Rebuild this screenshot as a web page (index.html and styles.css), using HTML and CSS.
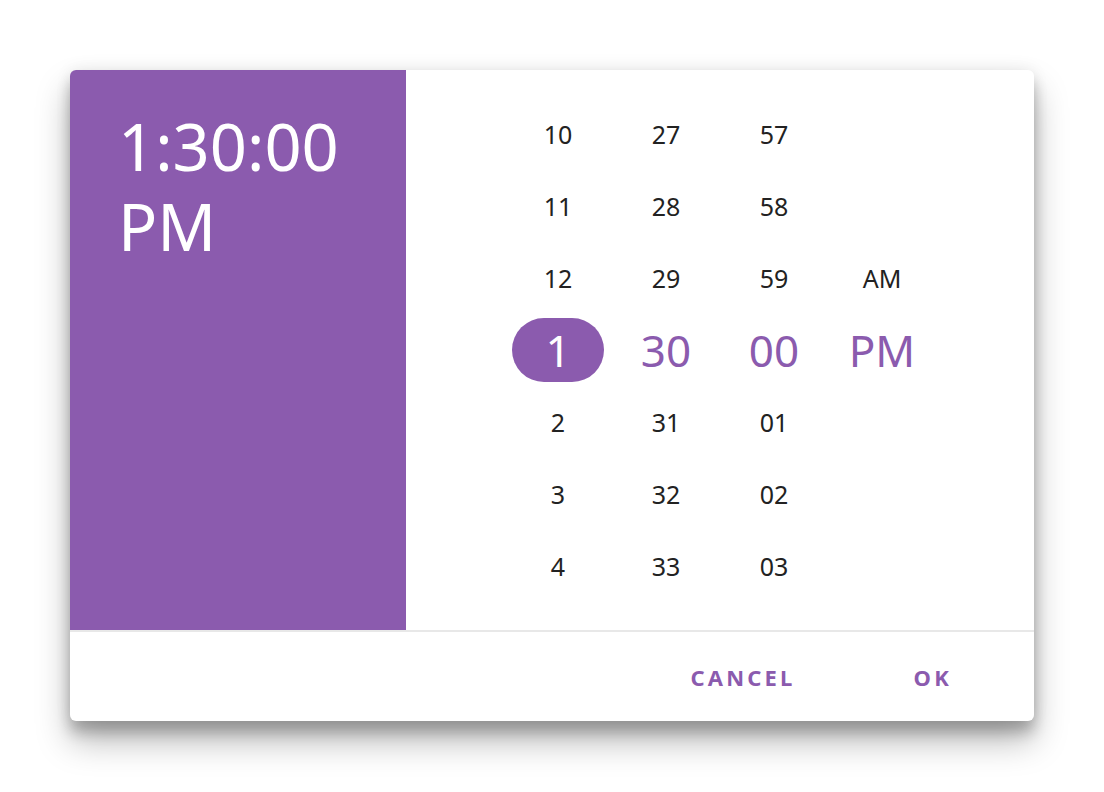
FILE: index.html
```html
<!DOCTYPE html>
<html lang="en">
<head>
    <meta charset="UTF-8">
    <meta name="viewport" content="width=device-width, initial-scale=1.0">
    <title>Time Picker</title>
    <link rel="stylesheet" href="styles.css">
</head>
<body>
    <div class="page">
        <div class="dialog">
            <div class="dialog-body">
                <div class="header">
                    <div class="header-time">1:30:00<br>PM</div>
                </div>
                <div class="picker">
                    <div class="column">
                        <div class="cell">10</div>
                        <div class="cell">11</div>
                        <div class="cell">12</div>
                        <div class="cell selected pill">1</div>
                        <div class="cell">2</div>
                        <div class="cell">3</div>
                        <div class="cell">4</div>
                    </div>
                    <div class="column">
                        <div class="cell">27</div>
                        <div class="cell">28</div>
                        <div class="cell">29</div>
                        <div class="cell selected">30</div>
                        <div class="cell">31</div>
                        <div class="cell">32</div>
                        <div class="cell">33</div>
                    </div>
                    <div class="column">
                        <div class="cell">57</div>
                        <div class="cell">58</div>
                        <div class="cell">59</div>
                        <div class="cell selected">00</div>
                        <div class="cell">01</div>
                        <div class="cell">02</div>
                        <div class="cell">03</div>
                    </div>
                    <div class="column">
                        <div class="cell"></div>
                        <div class="cell"></div>
                        <div class="cell">AM</div>
                        <div class="cell selected">PM</div>
                        <div class="cell"></div>
                        <div class="cell"></div>
                        <div class="cell"></div>
                    </div>
                </div>
            </div>
            <div class="actions">
                <button class="action-button cancel">CANCEL</button>
                <button class="action-button ok">OK</button>
            </div>
        </div>
    </div>
</body>
</html>
```

FILE: styles.css
```css
body {
    margin: 0;
    padding: 0;
    background: #fff;
    font-family: 'Noto Sans', 'Open Sans', sans-serif;
}

.page {
    padding: 70px 0 0 70px;
    height: 792px;
    box-sizing: border-box;
}

.dialog {
    width: 964px;
    height: 651px;
    background: #fff;
    border-radius: 6px;
    overflow: hidden;
    box-shadow: 0 20px 34px rgba(0, 0, 0, 0.28), 0 12px 14px rgba(0, 0, 0, 0.2), 0 0 16px rgba(0, 0, 0, 0.08);
    display: flex;
    flex-direction: column;
}

.dialog-body {
    display: flex;
    height: 560px;
    border-bottom: 2px solid #e8e8e8;
}

.header {
    width: 336px;
    background: #8b5bae;
    color: #fff;
    padding: 36px 0 0 48px;
    box-sizing: border-box;
}

.header-time {
    font-size: 65px;
    line-height: 80px;
    font-weight: 400;
}

.picker {
    flex: 1;
    display: flex;
    justify-content: center;
    align-items: center;
}

.column {
    width: 108px;
    display: flex;
    flex-direction: column;
    align-items: center;
}

.cell {
    height: 72px;
    display: flex;
    align-items: center;
    justify-content: center;
    font-size: 25px;
    color: #222;
}

.cell.selected {
    font-size: 44px;
    color: #8b5bae;
}

.cell.pill {
    width: 92px;
    height: 64px;
    margin: 4px 0;
    border-radius: 32px;
    background: #8b5bae;
    color: #fff;
}

.actions {
    flex: 1;
    display: flex;
    justify-content: flex-end;
    align-items: center;
    padding-right: 82px;
}

.action-button {
    background: none;
    border: none;
    font-family: 'Noto Sans', 'Open Sans', sans-serif;
    font-size: 22px;
    font-weight: 700;
    letter-spacing: 3.2px;
    color: #8b5bae;
    padding: 0;
    cursor: pointer;
}

.action-button.cancel {
    margin-right: 118px;
}
```
